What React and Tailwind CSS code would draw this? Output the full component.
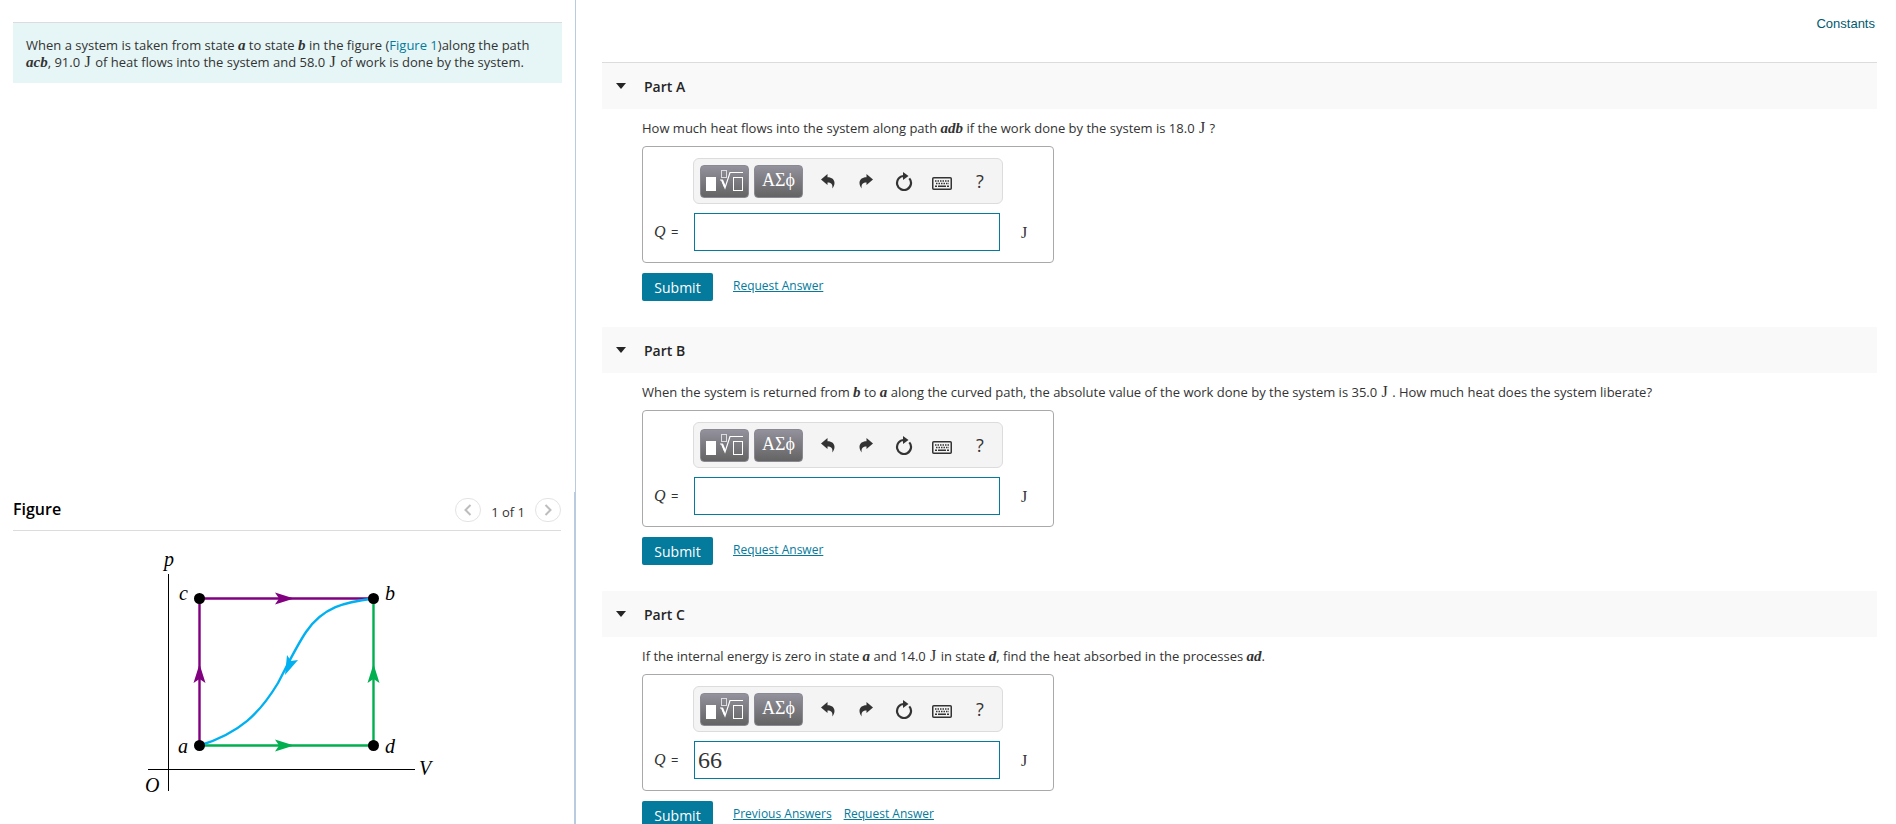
import React, { useState } from 'react';

function Sym({ children }) {
  return (
    <i className="font-['Liberation_Serif',serif] text-[15px] leading-none font-bold">{children}</i>
  );
}

function Joule() {
  return (
    <span className="mx-px font-['Liberation_Serif',serif] text-base leading-none">J</span>
  );
}

const parts = [
  {
    id: 'A',
    question: (
      <>
        How much heat flows into the system along path <Sym>adb</Sym> if the work done by the system is 18.0 <Joule /> ?
      </>
    ),
    answer: '',
    links: ['Request Answer']
  },
  {
    id: 'B',
    question: (
      <>
        When the system is returned from <Sym>b</Sym> to <Sym>a</Sym> along the curved path, the absolute value of the
        work done by the system is 35.0 <Joule /> . How much heat does the system liberate?
      </>
    ),
    answer: '',
    links: ['Request Answer']
  },
  {
    id: 'C',
    question: (
      <>
        If the internal energy is zero in state <Sym>a</Sym> and 14.0 <Joule /> in state <Sym>d</Sym>, find the heat
        absorbed in the processes <Sym>ad</Sym>.
      </>
    ),
    answer: '66',
    links: ['Previous Answers', 'Request Answer']
  }
];

function TemplatesIcon() {
  return (
    <svg width="37" height="23" viewBox="0 0 37 23" fill="none" stroke="#fff" aria-hidden="true">
      <rect x="0" y="7" width="10" height="14" fill="#fff" stroke="none" />
      <rect x="15.5" y="0.5" width="5" height="7" stroke="#dcdce0" />
      <path d="M14 10h2l3 8 5-15.5h13" strokeWidth="1.2" />
      <path d="M16 10l3 7" strokeWidth="2" />
      <rect x="27.5" y="7.5" width="9" height="13" />
    </svg>
  );
}

function UndoIcon() {
  return (
    <svg width="14" height="15" viewBox="0 0 14 15" fill="#333" aria-hidden="true">
      <path d="M0 5.5 6.5 0v3.2c4.5 0 7 2.3 7 5.8 0 2.3-1 4-2.2 5.5.5-3.5-.3-6-4.8-6V11z" />
    </svg>
  );
}

function RedoIcon() {
  return (
    <svg width="14" height="15" viewBox="0 0 14 15" fill="#333" aria-hidden="true">
      <path d="M14 5.5 7.5 0v3.2C3 3.2.5 5.5.5 9c0 2.300 1 4 2.200 5.500-.5-3.500.3-6 4.800-6V11z" />
    </svg>
  );
}

function ResetIcon() {
  return (
    <svg width="18" height="19" viewBox="0 0 18 19" fill="none" aria-hidden="true">
      <path d="M9 4a7 7 0 1 0 5.3 2.4" stroke="#333" strokeWidth="2.2" />
      <path d="M8 0l5.5 4L8 8z" fill="#333" />
    </svg>
  );
}

function KeyboardIcon() {
  return (
    <svg width="20" height="13" viewBox="0 0 20 13" fill="none" stroke="#333" aria-hidden="true">
      <rect x="0.75" y="0.75" width="18.5" height="11.5" rx="1" strokeWidth="1.5" />
      <path d="M3 4h14" strokeWidth="1.5" strokeDasharray="1.5 1" />
      <path d="M4 6.5h13" strokeWidth="1.5" strokeDasharray="1.5 1" />
      <path d="M3 9.3h2M6 9.3h8M15 9.3h2" strokeWidth="1.5" />
    </svg>
  );
}

const darkButton =
  'flex h-[33px] w-[49px] items-center justify-center rounded-sm border border-[#8b8a93] bg-linear-to-b from-[#93919c] to-[#646464] text-white';
const toolButton = 'flex h-8 w-[38px] items-center justify-center text-[#333]';

function Toolbar() {
  return (
    <div className="flex h-[46px] w-[310px] items-center rounded-md border border-[#dcdcdc] bg-[#f4f4f4] pl-[6px]">
      <button type="button" aria-label="Templates" className={darkButton}>
        <TemplatesIcon />
      </button>
      <button type="button" aria-label="Symbols" className={`${darkButton} mr-[6px] ml-[5px]`}>
        <span className="pb-[2px] font-['Liberation_Serif',serif] text-lg leading-none">ΑΣϕ</span>
      </button>
      <button type="button" aria-label="Undo" className={toolButton}><UndoIcon /></button>
      <button type="button" aria-label="Redo" className={toolButton}><RedoIcon /></button>
      <button type="button" aria-label="Reset" className={toolButton}><ResetIcon /></button>
      <button type="button" aria-label="Keyboard shortcuts" className={`${toolButton} pt-1`}><KeyboardIcon /></button>
      <button type="button" aria-label="Help" className={`${toolButton} text-lg`}>?</button>
    </div>
  );
}

function Part({ part }) {
  const [value, setValue] = useState(part.answer);
  const inputId = `answer-${part.id}`;

  return (
    <section className="mb-[26px]">
      <h2 className="flex h-[46px] items-center bg-[#f9f9f9] pl-[14px] text-sm font-semibold text-[#252525]">
        <svg width="10" height="6" viewBox="0 0 10 6" className="mr-[18px]" fill="#252525" aria-hidden="true">
          <path d="M0 0h10L5 6z" />
        </svg>
        <span className="pt-[2px]">Part {part.id}</span>
      </h2>
      <div className="pl-10">
        <p className="mb-[9px] pt-[11px] text-[13px] leading-[17px]">{part.question}</p>
        <div className="w-[412px] rounded border border-[#a9a9a9] pt-[11px] pb-[11px]">
          <div className="pl-[50px]">
            <Toolbar />
          </div>
          <div className="mt-[9px] flex items-center">
            <label htmlFor={inputId} className="w-[51px] pl-[11px] text-[13px]">
              <i className="mr-[2px] font-['Liberation_Serif',serif] text-base">Q</i> =
            </label>
            <input
              id={inputId}
              type="text"
              value={value}
              onChange={(e) => setValue(e.target.value)}
              className="h-[38px] w-[306px] border border-[#047a9c] bg-white px-[3px] font-['Liberation_Serif',serif] text-2xl text-[#333] outline-none"
            />
            <span className="ml-5"><Joule /></span>
          </div>
        </div>
        <div className="mt-[10px] flex">
          <button type="submit" className="h-7 w-[71px] rounded-xs bg-[#047a9c] pt-px text-sm leading-none text-white">
            Submit
          </button>
          <div className="ml-5 flex gap-3 pt-1 text-xs font-medium leading-[18px] text-[#047a9c]">
            {part.links.map((link) => (
              <a key={link} href="#" className="underline">
                {link}
              </a>
            ))}
          </div>
        </div>
      </div>
    </section>
  );
}

function PvDiagram() {
  return (
    <svg
      width="294"
      height="262"
      viewBox="0 0 294 262"
      className="mx-auto mt-[9px] block"
      fill="none"
      role="img"
      aria-label="pV diagram with states a, b, c and d"
    >
      <path d="M28.5 34v217" stroke="#000" />
      <path d="M8 229.5h267" stroke="#000" />

      <g strokeWidth="2.4">
        <path d="M59.5 205.5V58.5h174" stroke="#800080" />
        <path d="M59.5 205.5h174v-147" stroke="#00b050" />
        <path
          d="M59.5 205.5C100 193 120 173 138 143C148 124 156 107 166 92C183 67 205 62 233.5 58.5"
          stroke="#00b0f0"
        />
      </g>

      <path d="M154 58.5l-19-6 4 6-4 6z" fill="#800080" />
      <path d="M59.5 124l-6 19 6-4 6 4z" fill="#800080" />
      <path d="M154 205.5l-19-6 4 6-4 6z" fill="#00b050" />
      <path d="M233.5 124l-6 19 6-4 6 4z" fill="#00b050" />
      <path d="M145 135l2-20 4 6 7-1z" fill="#00b0f0" />

      <g fill="#000">
        <circle cx="59.5" cy="58.5" r="5.5" />
        <circle cx="233.5" cy="58.5" r="5.5" />
        <circle cx="59.5" cy="205.5" r="5.5" />
        <circle cx="233.5" cy="205.5" r="5.5" />
      </g>

      <g fill="#000" className="font-['Liberation_Serif',serif] text-xl italic">
        <text x="24" y="26">p</text>
        <text x="39" y="60">c</text>
        <text x="245" y="60">b</text>
        <text x="38" y="213">a</text>
        <text x="245" y="213">d</text>
        <text x="279" y="235">V</text>
        <text x="5" y="252">O</text>
      </g>
    </svg>
  );
}

function PagerButton({ label, path }) {
  return (
    <button
      type="button"
      aria-label={label}
      className="flex h-6 w-[26px] items-center justify-center rounded-full border border-[#e4e4e4]"
    >
      <svg width="8" height="12" viewBox="0 0 8 12" fill="none" stroke="#bdbdbd" strokeWidth="2" aria-hidden="true">
        <path d={path} />
      </svg>
    </button>
  );
}

function App() {
  return (
    <div className="flex h-screen overflow-hidden bg-white font-['Open_Sans',sans-serif] text-[#333]">
      <aside className="flex w-[576px] shrink-0 flex-col">
        <div className="flex-1 border-r border-[#b8cbdf] pt-[22px] pr-[13px] pl-[13px]">
          <p className="border-t border-[#dcdcdc] bg-[#e6f6f6] pt-[14px] pr-4 pb-3 pl-[13px] text-[13px] leading-[17px]">
            When a system is taken from state <Sym>a</Sym> to state <Sym>b</Sym> in the figure (
            <a href="#figure" className="text-[#047a9c]">Figure 1</a>)along the path <Sym>acb</Sym>, 91.0 <Joule /> of
            heat flows into the system and 58.0 <Joule /> of work is done by the system.
          </p>
        </div>
        <div id="figure" className="border-r-2 border-[#b8cbdf] pr-[13px] pb-[22px] pl-[13px]">
          <div className="flex h-[39px] items-center border-b border-[#dcdcdc] pb-[2px]">
            <h2 className="flex-1 pb-[2px] text-base font-semibold text-black">Figure</h2>
            <PagerButton label="Previous figure" path="M6.5 1l-5 5 5 5" />
            <span className="px-[10px] pt-1 text-[13px] leading-none">1 of 1</span>
            <PagerButton label="Next figure" path="M1.5 1l5 5-5 5" />
          </div>
          <PvDiagram />
        </div>
      </aside>

      <main className="min-w-0 flex-1 overflow-hidden pr-[19px] pl-[26px]">
        <div className="flex h-[62px] justify-end pt-4 pr-[2px]">
          <a href="#" className="font-['Liberation_Sans',Arial,sans-serif] text-[13px] leading-4 text-[#005a70]">
            Constants
          </a>
        </div>
        <div className="border-t border-[#dcdcdc]">
          {parts.map((part) => (
            <Part key={part.id} part={part} />
          ))}
        </div>
      </main>
    </div>
  );
}

export default App;
